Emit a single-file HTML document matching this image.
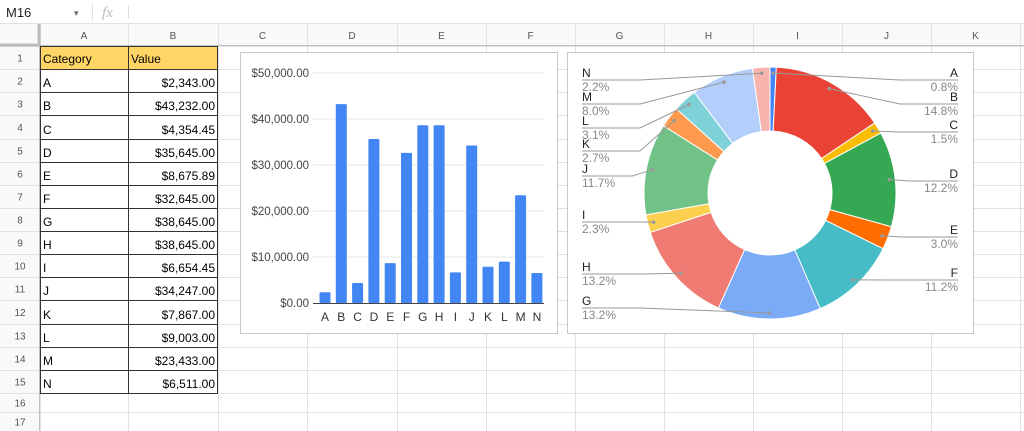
<!DOCTYPE html>
<html><head><meta charset="utf-8"><style>
body{margin:0;width:1024px;height:431px;overflow:hidden;background:#fff;font-family:"Liberation Sans",Arial,sans-serif;position:relative}
.a{position:absolute}
</style></head><body>
<svg id="s" class="a" style="left:0;top:0" width="1024" height="431" font-family="Liberation Sans, Arial, sans-serif"></svg>
<script>
var s=document.getElementById('s'),h='';
function R(x,y,w,hh,f,st){h+='<rect x="'+x+'" y="'+y+'" width="'+w+'" height="'+hh+'" fill="'+f+'"'+(st?' stroke="'+st+'"':'')+'/>';}
function L(x1,y1,x2,y2,c,w){h+='<line x1="'+x1+'" y1="'+y1+'" x2="'+x2+'" y2="'+y2+'" stroke="'+c+'" stroke-width="'+(w||1)+'"/>';}
function T(x,y,t,sz,c,a){h+='<text x="'+x+'" y="'+y+'" font-size="'+sz+'" fill="'+c+'"'+(a?' text-anchor="'+a+'"':'')+'>'+t+'</text>';}
L(0,23.5,1024,23.5,'#e0e0e0');
T(6,17,'M16',13,'#222');
T(74,16,'▾',9,'#666');
L(92.5,4,92.5,20,'#e0e0e0');
h+='<text x="102" y="17" font-size="15" font-style="italic" font-family="Liberation Serif,serif" fill="#bbb">fx</text>';
L(128.5,5,128.5,19,'#ddd');
var cols=[0,40,128,218,307,397,486,575,664,753,842,931,1020,1110];
R(0,24,1024,22,'#f8f9fa');
var rows=[46];for(var i=1;i<=15;i++)rows.push(Math.round(46+i*23.13));rows.push(412);rows.push(431);
R(0,46,40,385,'#f8f9fa');
for(var i=1;i<cols.length;i++){L(cols[i]+.5,24,cols[i]+.5,431,'#e2e2e2');}
for(var j=0;j<rows.length;j++){L(0,rows[j]+.5,1024,rows[j]+.5,'#e2e2e2');}
L(0,45.5,1024,45.5,'#c0c0c0');L(39.5,24,39.5,431,'#c0c0c0');
R(0,24,40,22,'#f8f9fa');L(0,45,40,45,'#bbb',3);L(39,24,39,46,'#bbb',3);
var CL='ABCDEFGHIJK';
for(var i=1;i<12;i++)T((cols[i]+cols[i+1])/2,39,CL[i-1],10,'#555','middle');
for(var j=0;j<17;j++)T(20,(rows[j]+rows[j+1])/2+4,j+1,10,'#555','middle');
R(40,46,178,rows[1]-46,'#ffd666');
var cat='ABCDEFGHIJKLMN'.split(''),val=[2343,43232,4354.45,35645,8675.89,32645,38645,38645,6654.45,34247,7867,9003,23433,6511];
function fm(v){var p=v.toFixed(2).split('.');return '$'+p[0].replace(/\B(?=(\d{3})+(?!\d))/g,',')+'.'+p[1];}
T(43,rows[1]-6,'Category',12,'#000');T(131,rows[1]-6,'Value',12,'#000');
for(var i=0;i<14;i++){var y=rows[i+2]-5;T(43,y,cat[i],12,'#000');T(215,y,fm(val[i]),12,'#000','end');}
for(var j=0;j<=15;j++)L(40,rows[j]+.5,218,rows[j]+.5,'#333');
L(40.5,46,40.5,rows[15],'#333');L(128.5,46,128.5,rows[15],'#333');L(217.5,46,217.5,rows[15],'#333');
R(240.5,52.5,317,281,'#fff','#c8c8c8');
var yl=['$50,000.00','$40,000.00','$30,000.00','$20,000.00','$10,000.00','$0.00'];
for(var k=0;k<6;k++){var y=73+k*46;if(k<5)L(313,y,544,y,'#e6e6e6');T(309,y+4,yl[k],11.5,'#444','end');}
for(var i=0;i<14;i++){var cx=325+i*16.3,bh=val[i]/50000*230;h+='<rect x="'+(cx-5.5)+'" y="'+(303-bh)+'" width="11" height="'+bh+'" fill="#4285f4" rx="1"/>';T(cx,321,cat[i],12,'#333','middle');}
L(313,303.5,544,303.5,'#444');
R(567.5,52.5,406,281,'#fff','#c8c8c8');
var cx=770,cy=193,ro=126,ri=62,tot=0;val.forEach(function(v){tot+=v});
var colr=['#4285f4','#ea4335','#fbbc04','#34a853','#ff6d01','#46bdc6','#7baaf7','#f07b72','#fcd04f','#71c287','#ff994d','#7ed1d7','#b3cefb','#f7b4ae'];
var a=0,mids=[];
function P(r,t){return (cx+r*Math.sin(t)).toFixed(2)+','+(cy-r*Math.cos(t)).toFixed(2);}
for(var i=0;i<14;i++){var da=val[i]/tot*2*Math.PI,b=a+da,lg=da>Math.PI?1:0;
h+='<path d="M'+P(ro,a)+' A'+ro+','+ro+' 0 '+lg+' 1 '+P(ro,b)+' L'+P(ri,b)+' A'+ri+','+ri+' 0 '+lg+' 0 '+P(ri,a)+'Z" fill="'+colr[i]+'" stroke="#fff" stroke-width="1"/>';
mids.push(a+da/2);a=b;}
var lab={A:[72,'r'],B:[96,'r'],C:[124,'r'],D:[173,'r'],E:[229,'r'],F:[272,'r'],G:[300,'l'],H:[266,'l'],I:[214,'l'],J:[168,'l'],K:[143,'l'],L:[120,'l'],M:[96,'l'],N:[72,'l']};
for(var i=0;i<14;i++){var c=cat[i],y=lab[c][0],sd=lab[c][1],t=mids[i],dx=cx+120*Math.sin(t),dy=cy-120*Math.cos(t),ly=y+8,pc=(val[i]/tot*100).toFixed(1)+'%';
if(sd=='r'){h+='<polyline points="958,'+ly+' '+Math.max(dx+20,900)+','+ly+' '+dx+','+dy+'" fill="none" stroke="#999" stroke-width="1"/>';T(958,y+5,c,12,'#222','end');T(958,y+19,pc,12,'#888','end');}
else{h+='<polyline points="582,'+ly+' '+Math.min(dx-20,640)+','+ly+' '+dx+','+dy+'" fill="none" stroke="#999" stroke-width="1"/>';T(582,y+5,c,12,'#222');T(582,y+19,pc,12,'#888');}
h+='<circle cx="'+dx+'" cy="'+dy+'" r="1.8" fill="#999"/>';}
s.innerHTML=h;
</script>
</body></html>
